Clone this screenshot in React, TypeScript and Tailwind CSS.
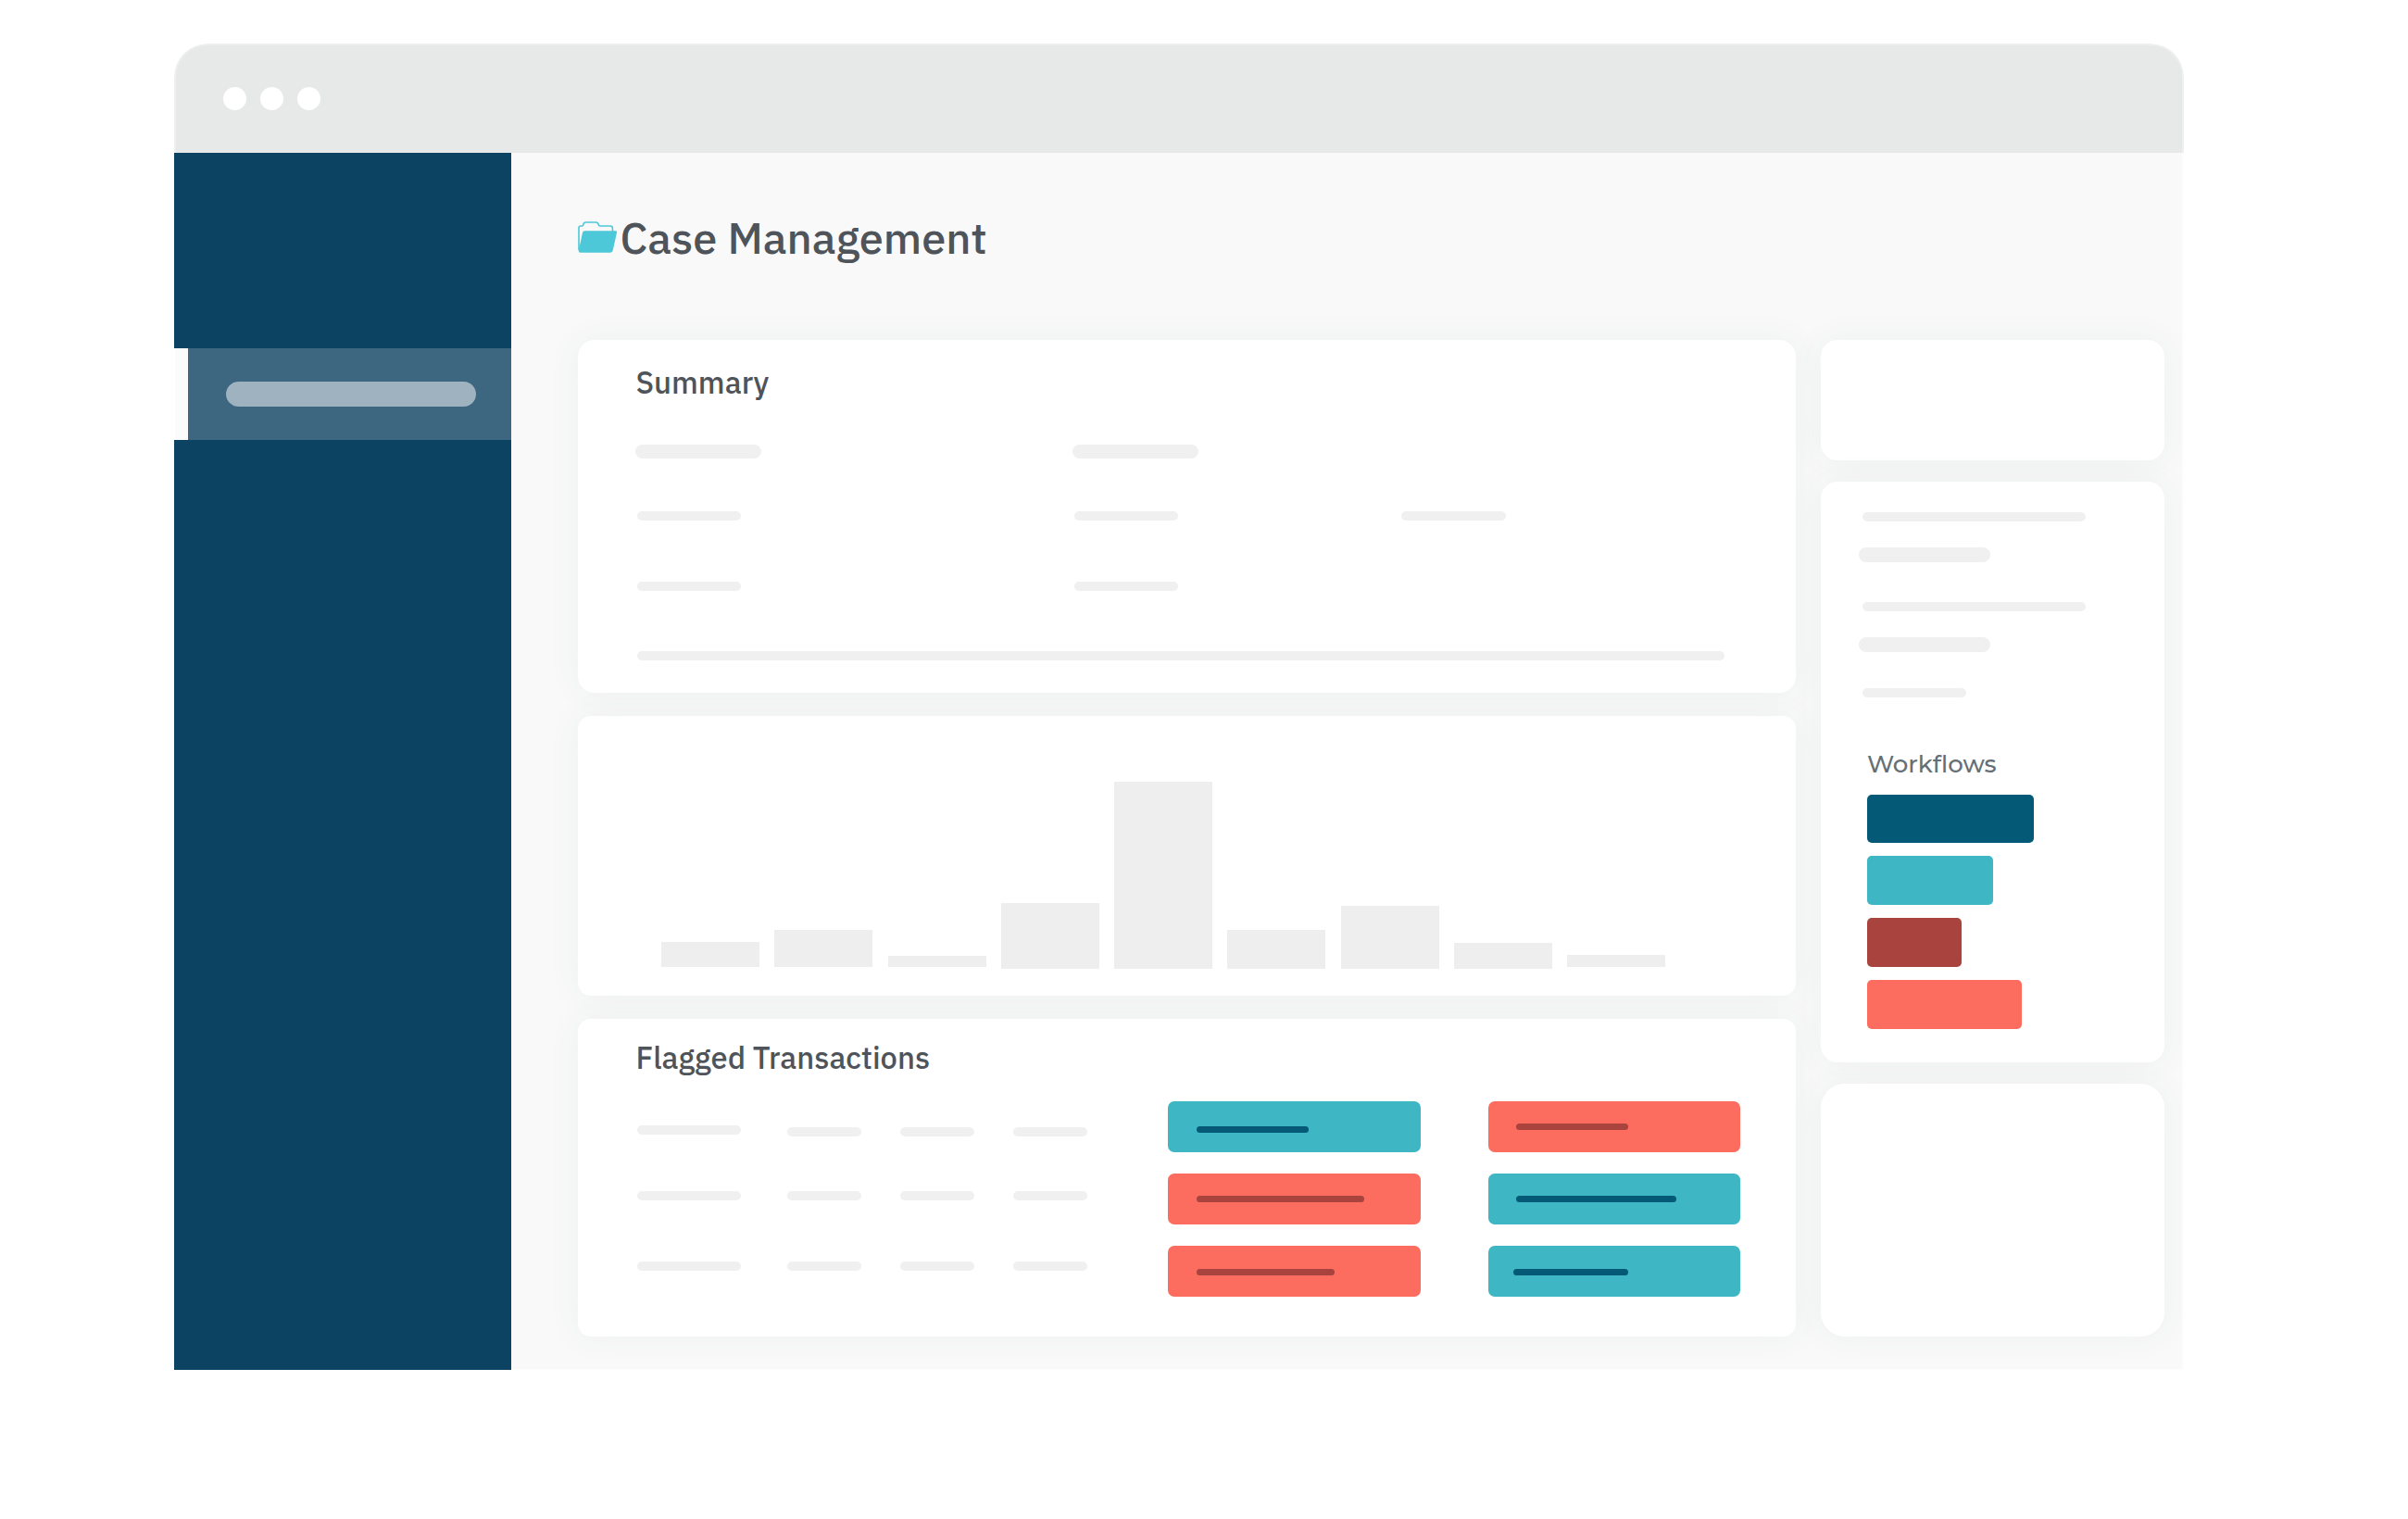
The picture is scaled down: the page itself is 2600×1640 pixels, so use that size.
import React from "react";

const workflows = [
  { width: 180, height: 52, className: "bg-[#045a76]" },
  { width: 136.5, height: 53, className: "bg-[#3fb6c3]" },
  { width: 102, height: 53, className: "bg-[#a8433e]" },
  { width: 167, height: 53, className: "bg-[#fc6c5f]" },
];

// "lift" is the distance of a bar's foot from the lowest one
const chart = [
  { height: 27, lift: 2 },
  { height: 40, lift: 2 },
  { height: 12, lift: 2 },
  { height: 71, lift: 0 },
  { height: 202, lift: 0 },
  { height: 42, lift: 0 },
  { height: 68, lift: 0 },
  { height: 28, lift: 0 },
  { height: 13, lift: 2 },
];

const tags = [
  { tone: "teal", width: 121, left: 31, top: 27 },
  { tone: "coral", width: 121, left: 30.5, top: 24 },
  { tone: "coral", width: 181, left: 31, top: 24 },
  { tone: "teal", width: 173, left: 30.5, top: 24 },
  { tone: "coral", width: 149, left: 31, top: 25 },
  { tone: "teal", width: 124, left: 27.5, top: 25 },
];

const Line = ({ className = "" }: { className?: string }) => (
  <div className={`h-2.5 rounded-full bg-[#f0f0f0] ${className}`}></div>
);

const Card = ({
  className = "",
  children,
}: {
  className?: string;
  children?: React.ReactNode;
}) => (
  <div
    className={`bg-white shadow-[0_0_36px_rgba(50,90,80,0.06)] ${className}`}
  >
    {children}
  </div>
);

const FolderIcon = () => (
  <svg width="43" height="35" viewBox="0 0 43 35" fill="none">
    <path
      d="M1 31V7Q1 5 3 5H4.500Q5.500 5 5.800 3.500Q6.300 1 8.500 1H19.500Q21.700 1 22.200 3.500Q22.500 5 24 5H35Q37.400 5 37.400 7.400V11"
      stroke="#4cc8d8"
      strokeWidth="1.600"
    />
    <path
      d="M7.200 10.300H40.700Q42.300 10.300 42 11.900L37.700 31.600Q37.200 33.700 35 33.700H2.600Q.4 33.700 .8 31.400L5 12.100Q5.400 10.300 7.200 10.300Z"
      fill="#4cc8d8"
    />
  </svg>
);

const Sidebar = () => (
  <aside className="w-[364px] h-[1314px] bg-[#0c4362] pt-[211px]">
    <div className="flex h-[99px] bg-[#3d6780]">
      <div className="w-[15px] bg-[#fafcfb] border-x border-white"></div>
      <div className="ml-[41px] mt-9 h-[27px] w-[270px] rounded-full bg-[#9eb2bf]"></div>
    </div>
  </aside>
);

const Summary = () => (
  <Card className="h-[381px] rounded-[18px] pl-16 pt-[23px]">
    <h2 className="-ml-[1.500px] h-[46px] text-[32.700px] leading-[46px] font-medium whitespace-nowrap text-[#4e5459]">
      Summary
    </h2>
    <div className="mt-11 -ml-0.5 flex gap-[336px]">
      <div className="h-[15px] w-[136px] rounded-full bg-[#f0f0f0]"></div>
      <div className="h-[15px] w-[136px] rounded-full bg-[#f0f0f0]"></div>
    </div>
    <div className="mt-[57px] flex">
      <Line className="w-28" />
      <Line className="ml-[360px] w-28" />
      <Line className="ml-[241px] w-[113px]" />
    </div>
    <div className="mt-[66px] flex gap-[360px]">
      <Line className="w-28" />
      <Line className="w-28" />
    </div>
    <Line className="mt-[65px] w-[1174px]" />
  </Card>
);

const ActivityChart = () => (
  <Card className="mt-[25px] h-[302px] rounded-[14px]">
    <div className="flex h-[273px] items-end gap-[16.300px] pl-[90px]">
      {chart.map((bar, index) => (
        <div
          key={index}
          className="w-[106px] bg-[#eee]"
          style={{ height: bar.height, marginBottom: bar.lift }}
        ></div>
      ))}
    </div>
  </Card>
);

const FlaggedTransactions = () => (
  <Card className="mt-[25px] flex h-[343px] rounded-[14px]">
    <div className="w-[637px] pl-16 pt-[19px]">
      <h2 className="-ml-[1.500px] h-[46px] text-[32.700px] leading-[46px] font-medium whitespace-nowrap text-[#4e5459]">
        Flagged Transactions
      </h2>
      <div className="mt-[50px] flex">
        <Line className="w-28" />
        <Line className="mt-0.5 ml-[49.500px] w-20" />
        <Line className="mt-0.5 ml-[42px] w-20" />
        <Line className="mt-0.5 ml-[42px] w-20" />
      </div>
      <div className="mt-[59px] flex">
        <Line className="w-28" />
        <Line className="ml-[49.500px] w-20" />
        <Line className="ml-[42px] w-20" />
        <Line className="ml-[42px] w-20" />
      </div>
      <div className="mt-[66px] flex">
        <Line className="w-28" />
        <Line className="ml-[49.500px] w-20" />
        <Line className="ml-[42px] w-20" />
        <Line className="ml-[42px] w-20" />
      </div>
    </div>
    <div className="mt-[89px] grid h-[212px] grid-cols-[272.500px_272.500px] grid-rows-[55px_55px_55px] gap-x-[73px] gap-y-[23px]">
      {tags.map((tag, index) => (
        <div
          key={index}
          className={`rounded-[7px] ${tag.tone === "teal" ? "bg-[#3fb6c3]" : "bg-[#fc6c5f]"}`}
          style={{ paddingLeft: tag.left, paddingTop: tag.top }}
        >
          <div
            className={`h-[7px] rounded-full ${tag.tone === "teal" ? "bg-[#045a76]" : "bg-[#a8433e]"}`}
            style={{ width: tag.width }}
          ></div>
        </div>
      ))}
    </div>
  </Card>
);

const Details = () => (
  <Card className="mt-[23px] h-[627px] rounded-[18px] pl-[45px] pt-[33px]">
    <Line className="w-[241px]" />
    <div className="mt-7 -ml-1 h-4 w-[142px] rounded-full bg-[#f0f0f0]"></div>
    <Line className="mt-[43px] w-[241px]" />
    <div className="mt-7 -ml-1 h-4 w-[142px] rounded-full bg-[#f0f0f0]"></div>
    <Line className="mt-[39px] w-28" />
    <h3 className="mt-[54px] ml-[5px] h-9 font-['Montserrat','Lato',sans-serif] text-[26px] leading-9 font-medium whitespace-nowrap text-[#666f76]">
      Workflows
    </h3>
    <div className="mt-[15px] ml-[4.500px] flex flex-col gap-3.5">
      {workflows.map((bar, index) => (
        <div
          key={index}
          className={`rounded-[5px] ${bar.className}`}
          style={{ width: bar.width, height: bar.height }}
        ></div>
      ))}
    </div>
  </Card>
);

const App = () => {
  return (
    <div className="h-[1640px] w-[2600px] bg-white pl-[188px] pt-[47px] font-['IBM_Plex_Sans','Open_Sans',sans-serif]">
      <div className="w-[2170px] overflow-hidden rounded-t-[36px]">
        {/* Title bar */}
        <div className="flex h-[118px] gap-[15px] rounded-t-[36px] border-x-2 border-t-2 border-[#eeeff0] bg-[#e7e9e8] pl-[50.500px] pt-[45px]">
          <div className="size-[25px] rounded-full bg-white"></div>
          <div className="size-[25px] rounded-full bg-white"></div>
          <div className="size-[25px] rounded-full bg-white"></div>
        </div>

        <div className="flex">
          <Sidebar />
          <main className="h-[1314px] w-[1806px] overflow-hidden border-r-2 border-b border-[#fdfdfd] bg-[#f9f9f9] pl-[72px]">
            <div className="flex h-[202px] items-start pt-[74px]">
              <FolderIcon />
              <h1 className="-mt-3.5 ml-[2.500px] text-[47px] leading-[64px] font-medium whitespace-nowrap text-[#4e5459]">
                Case Management
              </h1>
            </div>
            <div className="flex gap-[27px]">
              <div className="w-[1315px]">
                <Summary />
                <ActivityChart />
                <FlaggedTransactions />
              </div>
              <div className="w-[371px]">
                <Card className="h-[130px] rounded-[18px]" />
                <Details />
                <Card className="mt-[23px] h-[273px] rounded-[26px]" />
              </div>
            </div>
          </main>
        </div>
      </div>
    </div>
  );
};

export default App;
